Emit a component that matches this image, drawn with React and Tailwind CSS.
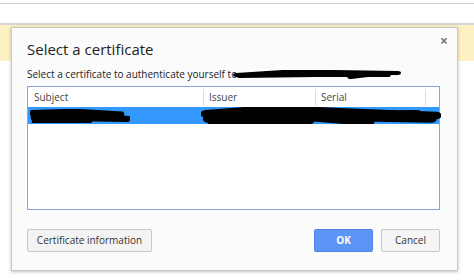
import React from 'react'

function Scribble({ className, d, w = 3.6 }) {
  return (
    <svg className={className} viewBox="0 0 100 10" preserveAspectRatio="none">
      <path d={d} fill="none" stroke="#000" strokeWidth={w} strokeLinecap="round" strokeLinejoin="round" />
    </svg>
  )
}

export default function App() {
  return (
    <div className="relative w-[474px] h-[280px] overflow-hidden bg-white" style={{ fontFamily: '"Open Sans", "Noto Sans", sans-serif' }}>
      {/* page behind the dialog */}
      <div className="h-[4px] border-b border-[#cfcfcf]" />
      <div className="h-[21px] border-b-2 border-[#d4d4d4]" />
      <div className="h-[36px] bg-[#fdf1c4]" />

      {/* dialog */}
      <div className="absolute left-[11px] top-[27px] w-[447px] h-[244px] bg-[#fbfbfb] border border-[#c9c9c9] shadow-[0_1px_3px_rgba(0,0,0,0.25)] px-[15px]">
        <button className="absolute right-[9px] top-[6px] text-[14px] leading-none text-[#777] font-bold">×</button>
        <div className="pt-[11px] text-[15px] leading-[20px] text-[#222]">Select a certificate</div>
        <div className="mt-[6px] flex items-center h-[18px] text-[10px] text-[#222]">
          <span>Select a certificate to authenticate yourself to</span>
          <Scribble className="w-[168px] h-[10px] -ml-[4px]" w={4} d="M2 6 L30 3 L60 3 L98 4 M4 7 L50 6 L92 6 M20 4 L85 5 L70 8" />
        </div>

        <div className="mt-[3px] w-[413px] h-[124px] border border-[#89a4d8] bg-white">
          <div className="flex h-[20px] text-[10px] text-[#444] items-center">
            <div className="w-[176px] h-[17px] pl-[6px] border-r border-[#dcdcdc] flex items-center">Subject</div>
            <div className="w-[112px] h-[17px] pl-[5px] border-r border-[#dcdcdc] flex items-center">Issuer</div>
            <div className="w-[110px] h-[17px] pl-[5px] border-r border-[#dcdcdc] flex items-center">Serial</div>
          </div>
          <div className="relative h-[17px] bg-[#3399ff] flex items-center">
            <Scribble className="absolute left-[2px] top-[2px] w-[100px] h-[14px]" w={4.5} d="M2 3 L45 2 L92 4 M3 6 L98 7 M10 5 L70 6 M4 9 L60 8" />
            <Scribble className="absolute left-[173px] top-[0px] w-[240px] h-[17px]" w={4.5} d="M2 4 L30 1 L60 3 L98 5 M3 7 L55 6 L96 7 M10 5 L90 4 M20 3 L70 9 M5 9 L45 8" />
          </div>
        </div>

        <div className="mt-[19px] flex items-center">
          <button className="w-[125px] h-[23px] border border-[#c8c8c8] rounded-[2px] bg-[#f3f3f3] text-[10px] text-[#333]">Certificate information</button>
          <div className="flex-1" />
          <button className="w-[59px] h-[23px] rounded-[2px] bg-[#5a95f5] border border-[#4c85e6] text-[10px] font-bold text-white">OK</button>
          <button className="ml-[8px] w-[59px] h-[23px] border border-[#c8c8c8] rounded-[2px] bg-[#f5f5f5] text-[10px] text-[#333]">Cancel</button>
          <div className="w-[2px]" />
        </div>
      </div>
    </div>
  )
}
